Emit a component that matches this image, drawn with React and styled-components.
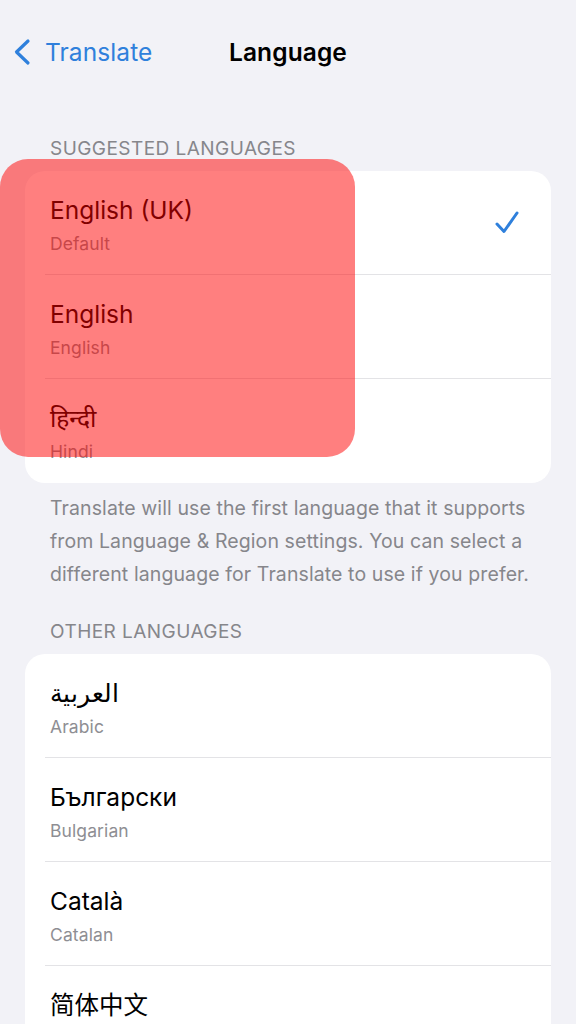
import React from "react";
import styled, { createGlobalStyle } from "styled-components";

const GlobalStyle = createGlobalStyle`
  html, body {
    margin: 0;
    padding: 0;
    background: #f2f2f7;
  }
  body {
    font-family: "Inter", "Noto Sans", "Noto Sans CJK SC", sans-serif;
    -webkit-font-smoothing: antialiased;
  }
`;

const Screen = styled.div`
  position: relative;
  width: 576px;
  min-height: 1024px;
  background: #f2f2f7;
  overflow: hidden;
`;

const NavBar = styled.div`
  position: relative;
  height: 104px;
  display: flex;
  align-items: flex-start;
  padding-top: 36px;
  box-sizing: border-box;
`;

const BackButton = styled.div`
  display: flex;
  align-items: center;
  gap: 13px;
  padding-left: 14px;
  color: #2f80dc;
  font-size: 24.5px;
  line-height: 32px;
  letter-spacing: 0.1px;
`;

const NavTitle = styled.div`
  position: absolute;
  left: 229px;
  top: 36px;
  font-size: 24.5px;
  line-height: 32px;
  font-weight: 600;
  color: #000;
  letter-spacing: 0.1px;
`;

const SectionLabel = styled.div`
  padding-left: 50px;
  font-size: 19px;
  line-height: 22px;
  color: #86868b;
  text-transform: uppercase;
  letter-spacing: 0.45px;
  margin-top: ${(p) => p.$top}px;
  margin-bottom: ${(p) => p.$gap}px;
`;

const Card = styled.div`
  margin: 0 25px;
  background: #fff;
  border-radius: 20px;
  overflow: hidden;
`;

const Row = styled.div`
  position: relative;
  height: 104px;
  display: flex;
  align-items: center;
  justify-content: space-between;
  padding: 0 31px 0 25px;
  box-sizing: border-box;
  &:not(:last-child)::after {
    content: "";
    position: absolute;
    left: 20px;
    right: 0;
    bottom: 0;
    height: 1px;
    background: #e3e3e6;
  }
`;

const RowText = styled.div`
  display: flex;
  flex-direction: column;
  gap: 8px;
  padding-top: 4px;
`;

const Title = styled.div`
  font-size: 24.5px;
  line-height: 30px;
  color: #000;
`;

const Subtitle = styled.div`
  font-size: 17.5px;
  line-height: 22px;
  color: #8e8e93;
  letter-spacing: 0.1px;
`;

const Footnote = styled.p`
  margin: 9px 0 0;
  padding: 0 20px 0 50px;
  font-size: 19.5px;
  line-height: 33px;
  color: #86868b;
  letter-spacing: 0.1px;
`;

const Highlight = styled.div`
  position: absolute;
  left: 0;
  top: 159px;
  width: 355px;
  height: 298px;
  border-radius: 28px;
  background: rgba(255, 0, 0, 0.5);
  pointer-events: none;
`;

const Chevron = () => (
  <svg width="18" height="28" viewBox="0 0 18 28" fill="none">
    <path
      d="M14 3 L2.5 14 L14 25"
      stroke="#2f80dc"
      strokeWidth="3.2"
      strokeLinecap="round"
      strokeLinejoin="round"
    />
  </svg>
);

const Check = () => (
  <svg width="26" height="26" viewBox="0 0 26 26" fill="none">
    <path
      d="M3 14 L10 21.5 L23 3"
      stroke="#2f80dc"
      strokeWidth="3"
      strokeLinecap="round"
      strokeLinejoin="round"
    />
  </svg>
);

const suggested = [
  { name: "English (UK)", sub: "Default", checked: true },
  { name: "English", sub: "English" },
  { name: "हिन्दी", sub: "Hindi" },
];

const others = [
  { name: "العربية", sub: "Arabic" },
  { name: "Български", sub: "Bulgarian" },
  { name: "Català", sub: "Catalan" },
  { name: "简体中文", sub: "Chinese, Simplified" },
];

const LanguageRow = ({ item }) => (
  <Row>
    <RowText>
      <Title>{item.name}</Title>
      <Subtitle>{item.sub}</Subtitle>
    </RowText>
    {item.checked && <Check />}
  </Row>
);

export default function App() {
  return (
    <Screen>
      <GlobalStyle />
      <NavBar>
        <BackButton>
          <Chevron />
          <span>Translate</span>
        </BackButton>
        <NavTitle>Language</NavTitle>
      </NavBar>

      <SectionLabel $top={34} $gap={11}>
        Suggested Languages
      </SectionLabel>
      <Card>
        {suggested.map((item) => (
          <LanguageRow key={item.sub} item={item} />
        ))}
      </Card>
      <Footnote>
        Translate will use the first language that it supports from Language
        &amp; Region settings. You can select a different language for
        Translate to use if you prefer.
      </Footnote>

      <SectionLabel $top={30} $gap={11}>
        Other Languages
      </SectionLabel>
      <Card>
        {others.map((item) => (
          <LanguageRow key={item.sub} item={item} />
        ))}
      </Card>

      <Highlight />
    </Screen>
  );
}
